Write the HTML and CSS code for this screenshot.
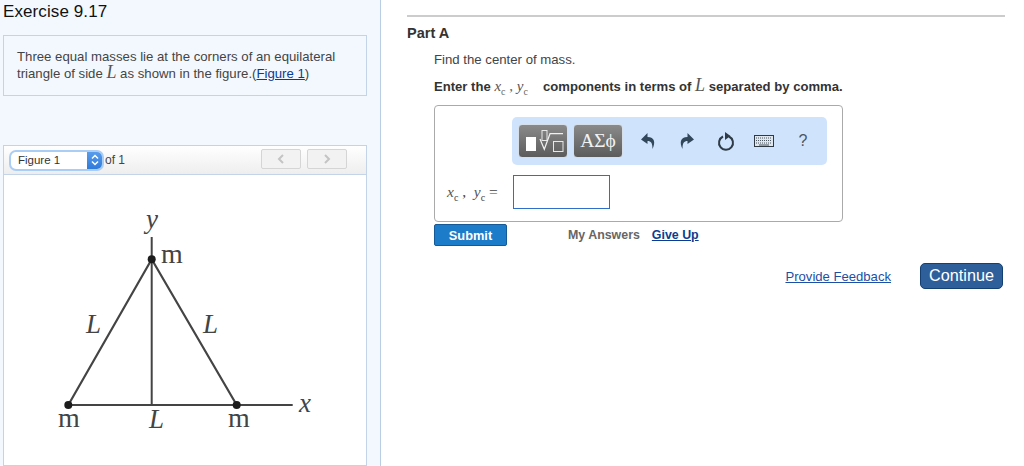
FILE: index.html
```html
<!DOCTYPE html>
<html lang="en">
<head>
    <meta charset="UTF-8">
    <meta name="viewport" content="width=device-width, initial-scale=1.0">
    <title>Exercise 9.17</title>
    <link rel="stylesheet" href="styles.css">
</head>
<body>
    <div class="page">
        <div class="left-col">
            <h1>Exercise 9.17</h1>
            <div class="intro">
                Three equal masses lie at the corners of an equilateral<br>
                triangle of side <i class="math math-big">L</i> as shown in the figure.(<a href="#">Figure 1</a>)
            </div>
            <div class="figure-box">
                <div class="figure-bar">
                    <div class="figure-select">
                        <span class="figure-select-label">Figure 1</span>
                        <span class="figure-select-arrows">
                            <svg width="10" height="14" viewBox="0 0 10 14"><path d="M2 5.500 L5 2.500 L8 5.500 M2 8.500 L5 11.500 L8 8.500" fill="none" stroke="#fff" stroke-width="1.500"/></svg>
                        </span>
                    </div>
                    <span class="figure-of">of 1</span>
                    <div class="figure-nav">
                        <span class="nav-btn"><svg width="8" height="10" viewBox="0 0 8 10"><path d="M6 1 L2 5 L6 9" fill="none" stroke="#c4c4c4" stroke-width="2"/></svg></span>
                        <span class="nav-btn"><svg width="8" height="10" viewBox="0 0 8 10"><path d="M2 1 L6 5 L2 9" fill="none" stroke="#c4c4c4" stroke-width="2"/></svg></span>
                    </div>
                </div>
                <div class="figure-body">
                    <svg class="diagram" width="362" height="291" viewBox="0 0 362 291">
                        <g stroke="#444" fill="none">
                            <path d="M147.700 62 V230" stroke-width="2"/>
                            <path d="M64.300 230 H288.700" stroke-width="2"/>
                            <path d="M147.700 84.300 L64.300 230 M147.700 84.300 L232.700 230" stroke-width="2.200"/>
                        </g>
                        <g fill="#1c1c1c">
                            <circle cx="147.700" cy="84.300" r="4"/>
                            <circle cx="64.300" cy="230" r="4"/>
                            <circle cx="232.700" cy="230" r="4"/>
                        </g>
                        <g class="diagram-text">
                            <text class="diagram-it" x="142" y="53">y</text>
                            <text x="157" y="88">m</text>
                            <text class="diagram-it" x="82" y="158">L</text>
                            <text class="diagram-it" x="199" y="158">L</text>
                            <text x="54" y="252">m</text>
                            <text class="diagram-it" x="145" y="253">L</text>
                            <text x="224" y="252">m</text>
                            <text class="diagram-it" x="295" y="237">x</text>
                        </g>
                    </svg>
                </div>
            </div>
        </div>

        <div class="right-col">
            <h2>Part A</h2>
            <div class="part-body">
                <p class="question">Find the center of mass.</p>
                <p class="instruction">Enter the <span class="math-inline"><i class="math">x</i><sub>c</sub> , <i class="math">y</i><sub>c</sub></span> components in terms of <i class="math math-big">L</i> separated by comma.</p>

                <div class="answer-box">
                    <div class="toolbar">
                        <span class="tool-btn tool-templates">
                            <svg width="48" height="32" viewBox="0 0 48 32">
                                <rect x="7" y="12" width="10" height="14" fill="#fff"/>
                                <rect x="23" y="5.500" width="5" height="10" fill="none" stroke="#e8e8e8"/>
                                <path d="M21 14 L25.300 24.300 L31 8.700 H44" fill="none" stroke="#f0f0f0" stroke-width="1.200"/>
                                <rect x="34.500" y="16.500" width="9.500" height="10" fill="none" stroke="#e8e8e8"/>
                            </svg>
                        </span>
                        <span class="tool-btn tool-symbols">ΑΣϕ</span>
                        <span class="tool-icon tool-undo">
                            <svg width="16" height="18" viewBox="0 0 16 18"><path d="M7.500 1 L1 7.500 L7.500 12 V9 C11 9 12.500 11 12.500 17 C15.500 11 15 5 7.500 5 Z" fill="#33475b"/></svg>
                        </span>
                        <span class="tool-icon tool-redo">
                            <svg width="16" height="18" viewBox="0 0 16 18"><path d="M8.500 1 L15 7.500 L8.500 12 V9 C5 9 3.500 11 3.500 17 C0.500 11 1 5 8.500 5 Z" fill="#33475b"/></svg>
                        </span>
                        <span class="tool-icon tool-reset">
                            <svg width="18" height="20" viewBox="0 0 18 20"><path d="M6 5.500 A7 7 0 1 0 12 5.500" fill="none" stroke="#2f3b46" stroke-width="2"/><path d="M8 1 V9 L13.500 5 Z" fill="#2f3b46"/></svg>
                        </span>
                        <span class="tool-icon tool-keyboard">
                            <svg width="20" height="12" viewBox="0 0 20 12">
                                <rect x="0.500" y="0.500" width="19" height="11" fill="#dfe6ee" stroke="#2f3942"/>
                                <path d="M2 3 H18 M2 5.500 H18 M2 8 H18" stroke="#4a555f" stroke-dasharray="1 1"/>
                                <path d="M5 10 H15" stroke="#4a555f"/>
                            </svg>
                        </span>
                        <span class="tool-icon tool-help">?</span>
                    </div>
                    <div class="answer-row">
                        <span class="answer-label"><i class="math">x</i><sub>c</sub> ,&nbsp; <i class="math">y</i><sub>c</sub> =</span>
                        <input class="answer-input" type="text">
                    </div>
                </div>

                <div class="submit-row">
                    <button class="submit-btn">Submit</button>
                    <div class="submit-links">
                        <span class="my-answers">My Answers</span>
                        <a class="give-up" href="#">Give Up</a>
                    </div>
                </div>
            </div>
            <div class="footer-row">
                <a class="feedback" href="#">Provide Feedback</a>
                <button class="continue-btn">Continue</button>
            </div>
        </div>
    </div>
</body>
</html>
```
FILE: styles.css
```css
html, body {
    margin: 0;
    padding: 0;
    height: 466px;
    overflow: hidden;
    background-color: #fff;
}
body {
    font-family: "Liberation Sans", Arial, sans-serif;
    color: #444;
}
a {
    color: #0a3d91;
}
.page {
    display: flex;
    height: 466px;
}
.left-col {
    width: 381px;
    height: 466px;
    box-sizing: border-box;
    padding: 0 13px 0 3px;
    background-color: #f3f8ff;
    border-right: 1px solid #b9cde3;
}
h1 {
    margin: 0;
    padding-top: 2px;
    height: 35px;
    box-sizing: border-box;
    font-size: 17px;
    line-height: 19px;
    font-weight: normal;
    color: #111;
    letter-spacing: 0.1px;
}
.intro {
    height: 61px;
    box-sizing: border-box;
    padding: 13px 13px 0;
    border: 1px solid #c3d4e8;
    font-size: 13.200px;
    line-height: 16px;
    color: #444;
}
.math {
    font-family: "Liberation Serif", serif;
    font-style: italic;
    color: #555;
}
.math-big {
    font-size: 18px;
    line-height: 14px;
}
.figure-box {
    margin-top: 49px;
    height: 321px;
    box-sizing: border-box;
    border: 1px solid #c3d4e8;
    background-color: #fff;
}
.figure-bar {
    display: flex;
    align-items: center;
    height: 29px;
    box-sizing: border-box;
    padding: 0 19px 0 7px;
    border-bottom: 1px solid #c3d4e8;
    background: linear-gradient(#fff, #eeeeee);
}
.figure-select {
    display: flex;
    width: 91px;
    height: 17px;
    border-radius: 5px;
    background-color: #fff;
    box-shadow: 0 0 0 2px #a9cdf5;
    overflow: hidden;
}
.figure-select-label {
    flex: 1;
    padding-left: 7px;
    font-size: 11.500px;
    line-height: 17px;
    color: #333;
}
.figure-select-arrows {
    display: flex;
    align-items: center;
    justify-content: center;
    width: 15px;
    background: linear-gradient(#5a9cea, #2f7bdc);
}
.figure-of {
    margin-left: 3px;
    font-size: 12px;
    color: #444;
}
.figure-nav {
    display: flex;
    gap: 6px;
    margin-left: auto;
    margin-bottom: 2px;
}
.nav-btn {
    display: flex;
    align-items: center;
    justify-content: center;
    width: 38px;
    height: 18px;
    border: 1px solid #d5d5d5;
    border-radius: 2px;
    background-color: #f2f2f2;
}
.figure-body {
    height: 290px;
    overflow: hidden;
}
.diagram {
    display: block;
}
.diagram-text text {
    font-family: "Liberation Serif", serif;
    font-size: 28px;
    fill: #444;
}
.diagram-text .diagram-it {
    font-style: italic;
    font-size: 27px;
}
.right-col {
    flex: 1;
    box-sizing: border-box;
    padding: 15px 19px 0 26px;
}
h2 {
    margin: 0;
    height: 32px;
    box-sizing: border-box;
    padding-top: 8px;
    border-top: 2px solid #ccc;
    font-size: 14.500px;
    line-height: 16px;
    color: #333;
}
.part-body {
    padding-left: 27px;
    width: 436px;
    box-sizing: border-box;
}
.question {
    margin: 6px 0 0;
    font-size: 13.200px;
    line-height: 14px;
    color: #444;
}
.instruction {
    margin: 11px 0 0;
    height: 16px;
    font-size: 13.100px;
    line-height: 16px;
    font-weight: bold;
    color: #333;
    white-space: nowrap;
}
.instruction .math {
    font-weight: normal;
}
.math-inline {
    display: inline-block;
    width: 42px;
    margin: 0 3px 0 0;
    font-family: "Liberation Serif", serif;
    font-weight: normal;
    font-size: 15px;
    line-height: 14px;
    color: #666;
}
sub {
    font-size: 10px;
    font-family: "Liberation Serif", serif;
    line-height: 0;
}
.answer-box {
    margin-top: 11px;
    width: 409px;
    height: 117px;
    box-sizing: border-box;
    padding: 11px 15px 0 77px;
    border: 1px solid #aaa;
    border-radius: 4px;
}
.toolbar {
    display: flex;
    align-items: center;
    height: 48px;
    box-sizing: border-box;
    padding-left: 6px;
    border-radius: 5px;
    background-color: #cfe4fc;
}
.tool-btn {
    display: flex;
    align-items: center;
    justify-content: center;
    height: 34px;
    box-sizing: border-box;
    border: 1px solid #d6dfe8;
    border-radius: 4px;
    background: linear-gradient(#8a8a8a, #5c5c5c);
    color: #f2f2f2;
}
.tool-templates {
    width: 50px;
}
.tool-symbols {
    width: 50px;
    margin-left: 5px;
    font-family: "Liberation Serif", serif;
    font-size: 19.500px;
}
.tool-icon {
    display: flex;
    align-items: center;
    justify-content: center;
    width: 20px;
    height: 20px;
}
.tool-undo {
    margin-left: 15px;
}
.tool-redo {
    margin-left: 19px;
}
.tool-reset {
    margin-left: 19px;
}
.tool-keyboard {
    margin-left: 18px;
}
.tool-help {
    margin-left: 19px;
    font-size: 16px;
    color: #4a5560;
}
.answer-row {
    display: flex;
    align-items: center;
    margin-top: 10px;
    margin-left: -76px;
}
.answer-label {
    width: 66px;
    padding-left: 11px;
    font-family: "Liberation Serif", serif;
    font-size: 15.500px;
    color: #444;
    white-space: nowrap;
}
.answer-input {
    width: 97px;
    height: 34px;
    box-sizing: border-box;
    border: 1px solid #2f6fc9;
    padding: 0;
    background-color: #fff;
}
.submit-row {
    display: flex;
    align-items: center;
    margin-top: 2px;
}
.submit-btn {
    width: 73px;
    height: 22px;
    padding: 0;
    border: 1px solid #155a96;
    border-radius: 2px;
    background-color: #1c7cc9;
    color: #fff;
    font-family: "Liberation Sans", Arial, sans-serif;
    font-size: 12.800px;
    font-weight: bold;
}
.submit-links {
    display: flex;
    gap: 12px;
    margin-left: 61px;
    font-size: 12.400px;
    font-weight: bold;
}
.my-answers {
    color: #666;
}
.give-up {
    color: #0a3d91;
}
.footer-row {
    display: flex;
    align-items: center;
    justify-content: flex-end;
    margin-top: 17px;
    margin-right: 2px;
}
.feedback {
    margin-right: 29px;
    font-size: 13.100px;
    color: #1c4fa5;
}
.continue-btn {
    width: 83px;
    height: 26px;
    padding: 0 0 2px;
    border: 1px solid #143f72;
    border-radius: 5px;
    background-color: #2f5f9b;
    color: #fff;
    font-family: "Liberation Sans", Arial, sans-serif;
    font-size: 16.200px;
}
```
